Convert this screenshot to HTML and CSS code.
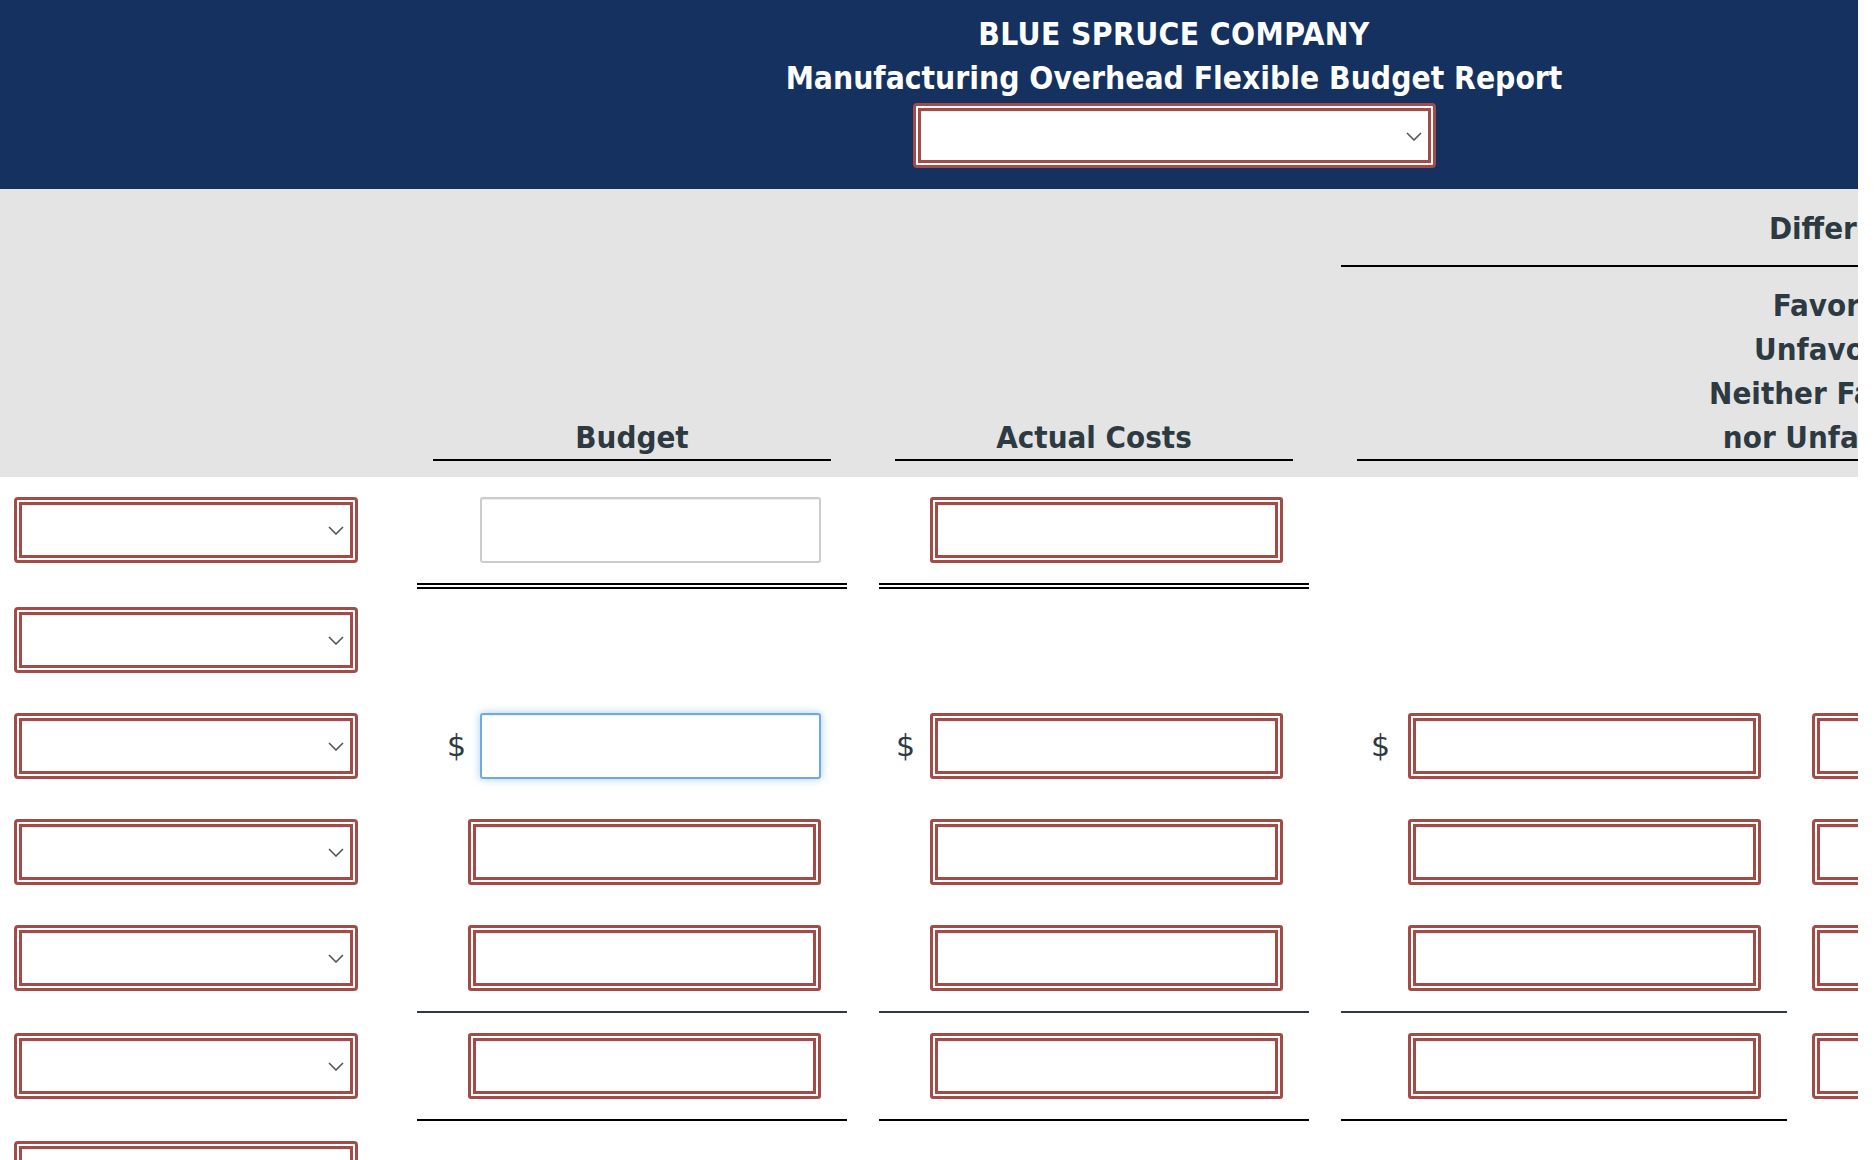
FILE: index.html
```html
<!DOCTYPE html>
<html lang="en">
<head>
<meta charset="utf-8">
<title>Manufacturing Overhead Flexible Budget Report</title>
<link rel="stylesheet" href="styles.css">
</head>
<body>
<div class="viewport">
  <table class="report">
    <colgroup>
      <col class="c1"><col class="c2"><col class="c3"><col class="c4"><col class="c5">
    </colgroup>
    <thead>
      <tr class="title-row">
        <th colspan="5" class="title-cell">
          <div class="company">BLUE SPRUCE COMPANY</div>
          <div class="report-name">Manufacturing Overhead Flexible Budget Report</div>
          <div class="dd dd-title"><svg viewBox="0 0 16 9"><polyline points="1,1 8,8 15,1"/></svg></div>
        </th>
      </tr>
      <tr class="group-row">
        <th colspan="3"></th>
        <th colspan="2"><div class="group-head">Difference</div></th>
      </tr>
      <tr class="col-row">
        <th></th>
        <th><div class="col-head">Budget</div></th>
        <th><div class="col-head">Actual Costs</div></th>
        <th colspan="2"><div class="col-head">Favorable<br>Unfavorable<br>Neither Favorable<br>nor Unfavorable</div></th>
      </tr>
    </thead>
    <tbody>
      <tr>
        <td class="first"><div class="inner"><div class="dd"><svg viewBox="0 0 16 9"><polyline points="1,1 8,8 15,1"/></svg></div></div></td>
        <td><div class="inner dbl"><div class="amt"><input class="fld" type="text"></div></div></td>
        <td><div class="inner dbl"><div class="amt act"><input class="fld bad" type="text"></div></div></td>
        <td class="dif"></td>
        <td class="fu"></td>
      </tr>
      <tr class="tight">
        <td class="first"><div class="inner"><div class="dd"><svg viewBox="0 0 16 9"><polyline points="1,1 8,8 15,1"/></svg></div></div></td>
        <td></td><td></td><td class="dif"></td><td class="fu"></td>
      </tr>
      <tr>
        <td class="first"><div class="inner"><div class="dd"><svg viewBox="0 0 16 9"><polyline points="1,1 8,8 15,1"/></svg></div></div></td>
        <td><div class="inner"><div class="amt"><span class="dollar">$</span><input class="fld focus" type="text"></div></div></td>
        <td><div class="inner"><div class="amt act"><span class="dollar">$</span><input class="fld bad" type="text"></div></div></td>
        <td class="dif"><div class="inner"><div class="amt"><span class="dollar">$</span><input class="fld bad" type="text"></div></div></td>
        <td class="fu"><div class="inner"><div class="dd"><svg viewBox="0 0 16 9"><polyline points="1,1 8,8 15,1"/></svg></div></div></td>
      </tr>
      <tr>
        <td class="first"><div class="inner"><div class="dd"><svg viewBox="0 0 16 9"><polyline points="1,1 8,8 15,1"/></svg></div></div></td>
        <td><div class="inner"><div class="amt"><input class="fld bad" type="text"></div></div></td>
        <td><div class="inner"><div class="amt act"><input class="fld bad" type="text"></div></div></td>
        <td class="dif"><div class="inner"><div class="amt"><input class="fld bad" type="text"></div></div></td>
        <td class="fu"><div class="inner"><div class="dd"><svg viewBox="0 0 16 9"><polyline points="1,1 8,8 15,1"/></svg></div></div></td>
      </tr>
      <tr>
        <td class="first"><div class="inner"><div class="dd"><svg viewBox="0 0 16 9"><polyline points="1,1 8,8 15,1"/></svg></div></div></td>
        <td><div class="inner sgl"><div class="amt"><input class="fld bad" type="text"></div></div></td>
        <td><div class="inner sgl"><div class="amt act"><input class="fld bad" type="text"></div></div></td>
        <td class="dif"><div class="inner sgl"><div class="amt"><input class="fld bad" type="text"></div></div></td>
        <td class="fu"><div class="inner"><div class="dd"><svg viewBox="0 0 16 9"><polyline points="1,1 8,8 15,1"/></svg></div></div></td>
      </tr>
      <tr>
        <td class="first"><div class="inner"><div class="dd"><svg viewBox="0 0 16 9"><polyline points="1,1 8,8 15,1"/></svg></div></div></td>
        <td><div class="inner sgl blk"><div class="amt"><input class="fld bad" type="text"></div></div></td>
        <td><div class="inner sgl blk"><div class="amt act"><input class="fld bad" type="text"></div></div></td>
        <td class="dif"><div class="inner sgl blk"><div class="amt"><input class="fld bad" type="text"></div></div></td>
        <td class="fu"><div class="inner"><div class="dd"><svg viewBox="0 0 16 9"><polyline points="1,1 8,8 15,1"/></svg></div></div></td>
      </tr>
      <tr>
        <td class="first"><div class="inner"><div class="dd"><svg viewBox="0 0 16 9"><polyline points="1,1 8,8 15,1"/></svg></div></div></td>
        <td></td><td></td><td class="dif"></td><td class="fu"></td>
      </tr>
    </tbody>
  </table>
</div>
</body>
</html>
```

FILE: styles.css
```css
* {
  box-sizing: border-box;
}

html,
body {
  margin: 0;
  padding: 0;
  background: #ffffff;
}

body {
  font-family: "DejaVu Sans Condensed", "DejaVu Sans", sans-serif;
  font-stretch: condensed;
  color: #2d3a42;
}

.viewport {
  width: 1858px;
  height: 1160px;
  overflow: hidden;
}

.report {
  border-collapse: separate;
  border-spacing: 0;
  table-layout: fixed;
  width: 2375px;
}

.c1 { width: 401px; }
.c2 { width: 462px; }
.c3 { width: 462px; }
.c4 { width: 462px; }
.c5 { width: 588px; }

/* ---------- title band ---------- */
.title-cell {
  background: #14315f;
  color: #ffffff;
  text-align: center;
  font-weight: 700;
  font-size: 31.5px;
  line-height: 44px;
  padding: 12px 27px 21px 0;
}

.company {
  letter-spacing: 0.4px;
}

/* ---------- column headings ---------- */
.group-row th,
.col-row th {
  background: #e4e4e4;
  font-weight: 700;
  font-size: 31px;
  line-height: 44px;
  text-align: center;
  color: #2d3a42;
}

.group-row th {
  padding: 17px 16px 0;
  vertical-align: top;
}

.group-head {
  padding-bottom: 15px;
  border-bottom: 2px solid #000000;
}

.col-row th {
  padding: 16px 16px;
  vertical-align: bottom;
}

.col-head {
  margin: 0 16px;
  border-bottom: 2px solid #000000;
}

/* ---------- body rows ---------- */
tbody td {
  padding: 20px 16px 0;
  vertical-align: top;
}

tbody td.first {
  padding-left: 14px;
  padding-right: 0;
}

tbody td.dif {
  padding-right: 0;
}

tbody td.fu {
  padding-left: 25px;
  padding-right: 0;
}

tbody tr.tight td {
  padding-top: 18px;
}

.inner {
  padding-bottom: 20px;
}

.inner.dbl {
  border-bottom: 6px double #000000;
}

.inner.sgl {
  border-bottom: 2px solid #2f3a43;
}

.inner.sgl.blk {
  border-bottom-color: #000000;
}

.amt {
  display: flex;
  align-items: center;
  height: 66px;
  padding: 0 26px 0 30px;
}

.amt.act {
  padding-left: 17px;
}

.dollar {
  font-family: "DejaVu Sans", sans-serif;
  font-stretch: normal;
  font-size: 30px;
  font-weight: 400;
  color: #2d3a42;
  line-height: 1;
}

.fld {
  margin-left: auto;
  display: block;
  width: 341px;
  height: 66px;
  padding: 0;
  border: 2px solid #cccccc;
  border-radius: 3px;
  background: #ffffff;
  box-shadow: inset 0 1px 1px rgba(0, 0, 0, 0.075);
  outline: none;
  font: inherit;
}

.fld.bad {
  width: 353px;
  border: 8px double #a24b47;
}

.fld.focus {
  border-color: #70a8e3;
  box-shadow: inset 0 1px 1px rgba(0, 0, 0, 0.075), 0 0 8px rgba(102, 175, 233, 0.6);
}

/* select-like boxes */
.dd {
  position: relative;
  width: 344px;
  height: 66px;
  border: 8px double #a24b47;
  border-radius: 4px;
  background: #ffffff;
  box-shadow: inset 0 1px 1px rgba(0, 0, 0, 0.075);
}

.dd.dd-title {
  width: 523px;
  height: 65px;
  margin: 3px auto 0;
}

.dd svg {
  position: absolute;
  right: 6px;
  top: 50%;
  width: 16px;
  height: 9px;
  margin-top: -4px;
  fill: none;
  stroke: #555555;
  stroke-width: 1.6;
}
```
